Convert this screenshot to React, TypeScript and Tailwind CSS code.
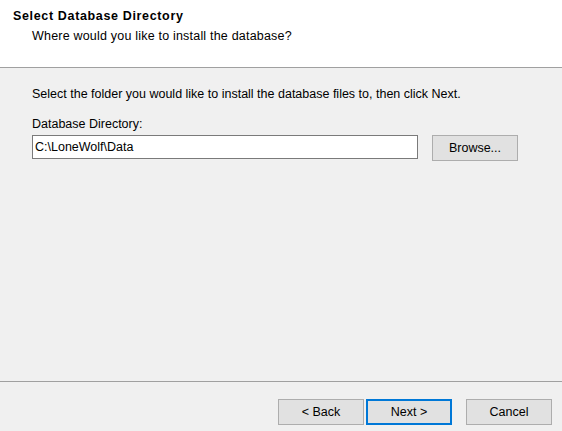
import React from 'react'

const font = { fontFamily: '"Liberation Sans", Arial, sans-serif' }

function WinButton({ label, focused = false }: { label: string; focused?: boolean }) {
  return (
    <button
      type="button"
      className={
        focused
          ? 'h-[26px] w-[86px] border-2 border-[#0078d7] bg-[#e1e1e1] text-[12.5px] text-black'
          : 'h-[26px] w-[86px] border border-[#adadad] bg-[#e1e1e1] text-[12.5px] text-black'
      }
    >
      {label}
    </button>
  )
}

export default function App() {
  return (
    <div className="flex h-[431px] w-[562px] flex-col overflow-hidden bg-[#f0f0f0] text-[12.5px] leading-[16px] text-black" style={font}>
      {/* Header */}
      <div className="h-[68px] shrink-0 border-b border-[#a0a0a0] bg-white pt-[8px]">
        <div className="pl-[13px] font-bold tracking-[0.65px]">Select Database Directory</div>
        <div className="pl-[32px] pt-[4px] tracking-[0.2px]">Where would you like to install the database?</div>
      </div>

      {/* Body */}
      <div className="flex-1 px-[32px] pt-[18px]">
        <p>Select the folder you would like to install the database files to, then click Next.</p>
        <label className="mt-[14px] block">Database Directory:</label>
        <div className="mt-[3px] flex items-start gap-[14px]">
          <input
            readOnly
            value="C:\LoneWolf\Data"
            className="h-[24px] w-[386px] border border-[#7a7a7a] bg-white px-[2px] text-[12.5px] text-black outline-none"
            style={font}
          />
          <WinButton label="Browse..." />
        </div>
      </div>

      {/* Footer */}
      <div className="flex h-[50px] shrink-0 justify-end border-t border-[#a0a0a0] pr-[10px] pt-[17px]">
        <div className="flex gap-[2px]">
          <WinButton label="< Back" />
          <WinButton label="Next >" focused />
        </div>
        <div className="ml-[14px]">
          <WinButton label="Cancel" />
        </div>
      </div>
    </div>
  )
}
